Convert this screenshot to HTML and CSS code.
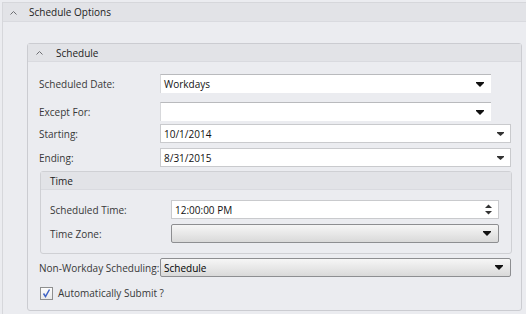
FILE: index.html
```html
<!DOCTYPE html>
<html>
<head>
<meta charset="utf-8">
<link rel="stylesheet" href="styles.css">
</head>
<body>
<div class="panel">
  <div class="panel-head">
    <svg class="caret" width="7" height="5" viewBox="0 0 7 5"><path d="M0.5 4.5 L3.5 1.5 L6.5 4.5" fill="none" stroke="#6d6e72" stroke-width="1"/></svg>
    <span>Schedule Options</span>
  </div>
  <div class="panel-body">
    <div class="group">
      <div class="group-head">
        <svg class="caret" width="7" height="5" viewBox="0 0 7 5"><path d="M0.5 4.5 L3.5 1.5 L6.5 4.5" fill="none" stroke="#6d6e72" stroke-width="1"/></svg>
        <span>Schedule</span>
      </div>
      <div class="group-body">
        <div class="row r1">
          <label class="lbl">Scheduled Date:</label>
          <div class="field combo-flat short"><span>Workdays</span><svg class="arrow" width="8" height="5" viewBox="0 0 8 5"><path d="M0 0 H8 V1 L4 5 L0 1 Z" fill="#111"/></svg></div>
        </div>
        <div class="row r2">
          <label class="lbl">Except For:</label>
          <div class="field combo-flat short"><span></span><svg class="arrow" width="8" height="5" viewBox="0 0 8 5"><path d="M0 0 H8 V1 L4 5 L0 1 Z" fill="#111"/></svg></div>
        </div>
        <div class="row r3">
          <label class="lbl">Starting:</label>
          <div class="field combo-box"><span>10/1/2014</span><svg class="arrow small" width="7" height="4" viewBox="0 0 7 4"><path d="M0 0 H7 V1 L3.5 4 L0 1 Z" fill="#333"/></svg></div>
        </div>
        <div class="row r4">
          <label class="lbl">Ending:</label>
          <div class="field combo-box"><span>8/31/2015</span><svg class="arrow small" width="7" height="4" viewBox="0 0 7 4"><path d="M0 0 H7 V1 L3.5 4 L0 1 Z" fill="#333"/></svg></div>
        </div>
        <div class="subgroup">
          <div class="sub-head">Time</div>
          <div class="sub-body">
            <div class="row t1">
              <label class="lbl sub">Scheduled Time:</label>
              <div class="field combo-box time"><span>12:00:00 PM</span>
                <svg class="spin" width="7" height="11" viewBox="0 0 7 11"><path d="M3.5 0.5 L7 4 H0 Z" fill="#333"/><path d="M0 7 H7 L3.5 10.5 Z" fill="#333"/></svg>
              </div>
            </div>
            <div class="row t2">
              <label class="lbl sub">Time Zone:</label>
              <div class="field combo-btn time"><span></span><svg class="arrow" width="8" height="5" viewBox="0 0 8 5"><path d="M0 0 H8 V1 L4 5 L0 1 Z" fill="#111"/></svg></div>
            </div>
          </div>
        </div>
        <div class="row r5">
          <label class="lbl">Non-Workday Scheduling:</label>
          <div class="field combo-btn"><span class="dark">Schedule</span><svg class="arrow" width="8" height="5" viewBox="0 0 8 5"><path d="M0 0 H8 V1 L4 5 L0 1 Z" fill="#111"/></svg></div>
        </div>
        <div class="check-row">
          <span class="check"><svg width="11" height="11" viewBox="0 0 11 11"><path d="M2.5 5.5 L4.5 8.5 L8.5 1.5" fill="none" stroke="#3f63c4" stroke-width="1.5"/></svg></span>
          <span class="check-lbl">Automatically Submit ?</span>
        </div>
      </div>
    </div>
  </div>
</div>
</body>
</html>
```

FILE: styles.css
```css
* { box-sizing: border-box; }
html, body { margin: 0; padding: 0; }
body {
  background: #ebecf0;
  font-family: "Open Sans", "Noto Sans", sans-serif;
  font-size: 10px;
  color: #383838;
  width: 526px;
  height: 314px;
  overflow: hidden;
}
.panel {
  margin: 2px 0 0 2px;
  border: 1px solid #d6d7db;
  border-right: none;
  height: 320px;
}
.panel-head {
  height: 19px;
  background: #e2e3e7;
  border-bottom: 1px solid #d9dadf;
  display: flex;
  align-items: center;
  padding-left: 7px;
  color: #222;
}
.caret { display: block; margin-right: 12px; }
.panel-body {
  padding: 21px 4px 0 24px;
}
.group {
  border: 1px solid #cbccd1;
  border-radius: 3px;
  height: 268px;
}
.group-head {
  height: 18px;
  background: #e2e3e7;
  border-bottom: 1px solid #d9dadf;
  display: flex;
  align-items: center;
  padding-left: 8px;
  color: #222;
}
.group-head .caret { margin-right: 13px; }
.group-body {
  padding: 12px 9px 0 11px;
}
.row {
  display: flex;
  align-items: center;
}
.lbl { width: 121px; flex: none; white-space: nowrap; }
.field {
  height: 19px;
  display: flex;
  align-items: center;
  justify-content: space-between;
  padding: 0 7px 0 3px;
  color: #111;
}
.combo-flat {
  background: #fff;
  border-top: 1px solid #b9babd;
  border-left: 1px solid #d7d8db;
  width: 331px;
}
.combo-box {
  background: #fff;
  border: 1px solid #c9cacd;
  width: 351px;
  padding-right: 6px;
}
.combo-btn {
  background: linear-gradient(#f6f6f6, #e8e8e8 50%, #d9d9d9);
  border: 1px solid #8d8e91;
  border-radius: 2px;
  width: 351px;
}
.field.time { width: 328px; }
.arrow { display: block; }
.spin { display: block; }
.dark { color: #000; }
.r2 { margin-top: 9px; }
.r3 { margin-top: 3px; }
.r4 { margin-top: 5px; }
.subgroup {
  margin: 4px 0 0 1px;
  border: 1px solid #cfd0d4;
  border-radius: 3px;
  height: 83px;
}
.sub-head {
  height: 18px;
  background: #e2e3e7;
  border-bottom: 1px solid #d9dadf;
  padding-left: 9px;
  display: flex;
  align-items: center;
  color: #222;
}
.sub-body {
  padding: 10px 10px 0 9px;
}
.t2 { margin-top: 5px; }
.r5 { margin-top: 4px; }
.check-row {
  display: flex;
  align-items: center;
  margin-top: 9px;
  padding-left: 1px;
}
.check {
  width: 13px;
  height: 13px;
  border: 1px solid #8e8f8f;
  background: linear-gradient(#fdfdfd, #e9e9e9);
  display: flex;
  align-items: center;
  justify-content: center;
  margin-right: 5px;
}
.check svg { display: block; }
```
